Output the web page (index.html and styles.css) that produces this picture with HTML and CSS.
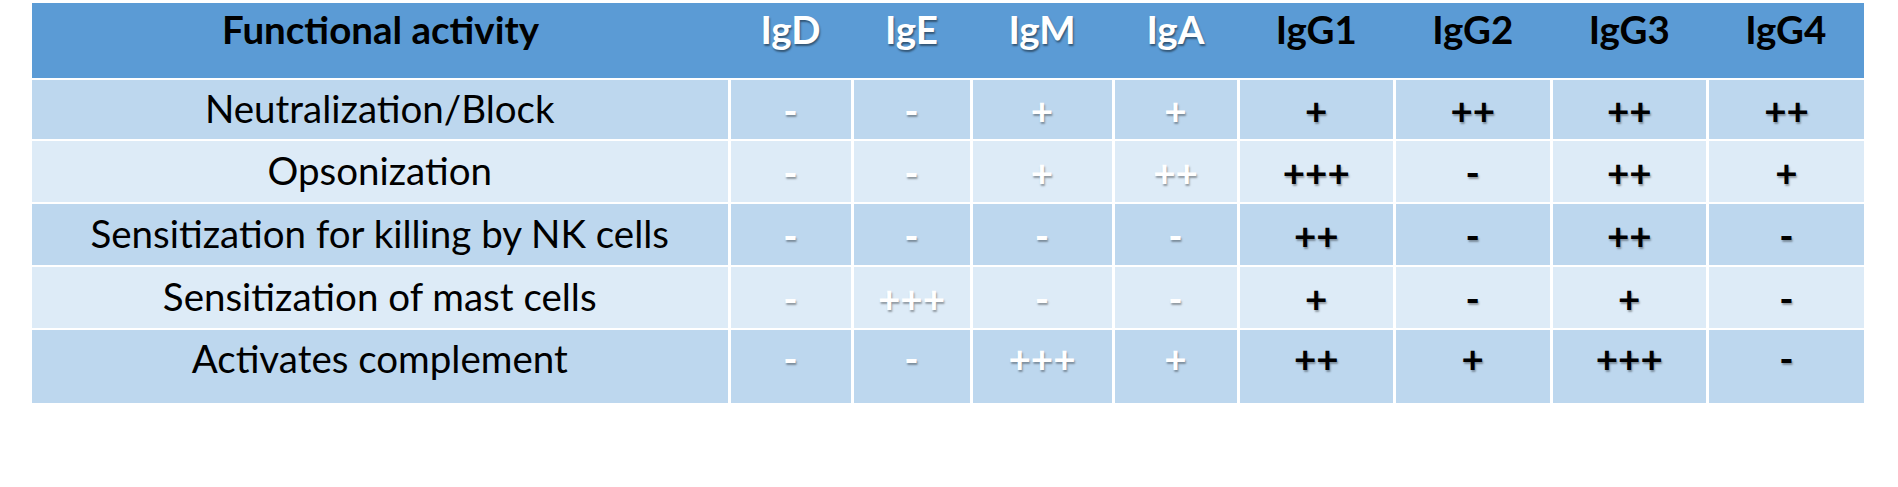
FILE: index.html
```html
<!DOCTYPE html>
<html>
<head>
<meta charset="utf-8">
<link rel="stylesheet" href="styles.css">
</head>
<body>
<table class="ig-table">
  <colgroup>
    <col class="c-func">
    <col class="c-a"><col class="c-b"><col class="c-c"><col class="c-d">
    <col class="c-g"><col class="c-g"><col class="c-g"><col class="c-g">
  </colgroup>
  <thead>
    <tr class="head">
      <th class="dark">Functional activity</th>
      <th class="light">IgD</th>
      <th class="light">IgE</th>
      <th class="light">IgM</th>
      <th class="light">IgA</th>
      <th class="dark">IgG1</th>
      <th class="dark">IgG2</th>
      <th class="dark">IgG3</th>
      <th class="dark">IgG4</th>
    </tr>
  </thead>
  <tbody>
    <tr class="odd r1">
      <td class="label">Neutralization/Block</td>
      <td class="w">-</td><td class="w">-</td><td class="w">+</td><td class="w">+</td>
      <td class="b">+</td><td class="b">++</td><td class="b">++</td><td class="b">++</td>
    </tr>
    <tr class="even r2">
      <td class="label">Opsonization</td>
      <td class="w">-</td><td class="w">-</td><td class="w">+</td><td class="w">++</td>
      <td class="b">+++</td><td class="b">-</td><td class="b">++</td><td class="b">+</td>
    </tr>
    <tr class="odd r3">
      <td class="label">Sensitization for killing by NK cells</td>
      <td class="w">-</td><td class="w">-</td><td class="w">-</td><td class="w">-</td>
      <td class="b">++</td><td class="b">-</td><td class="b">++</td><td class="b">-</td>
    </tr>
    <tr class="even r4">
      <td class="label">Sensitization of mast cells</td>
      <td class="w">-</td><td class="w">+++</td><td class="w">-</td><td class="w">-</td>
      <td class="b">+</td><td class="b">-</td><td class="b">+</td><td class="b">-</td>
    </tr>
    <tr class="odd r5 last">
      <td class="label">Activates complement</td>
      <td class="w">-</td><td class="w">-</td><td class="w">+++</td><td class="w">+</td>
      <td class="b">++</td><td class="b">+</td><td class="b">+++</td><td class="b">-</td>
    </tr>
  </tbody>
</table>
</body>
</html>
```
FILE: styles.css
```css
html, body {
  margin: 0;
  padding: 0;
  background: #ffffff;
}

body {
  padding: 3px 0 0 32px;
  font-family: Lato, "Open Sans", sans-serif;
}

.ig-table {
  border-collapse: collapse;
  table-layout: fixed;
  width: 1832px;
}

.c-func { width: 697px; }
.c-a { width: 123px; }
.c-b { width: 119px; }
.c-c { width: 142px; }
.c-d { width: 125px; }
.c-g { width: 156.5px; }

.head th {
  background: #5b9bd5;
  height: 73px;
  padding: 2px 0 0 0;
  vertical-align: top;
  font-size: 38.5px;
  font-weight: 700;
  line-height: 48px;
  text-align: center;
  border-bottom: 2px solid #ffffff;
}

.head th.light {
  color: #ffffff;
  text-shadow: 1px 2px 2px rgba(0, 0, 0, 0.45);
}

.head th.dark {
  color: #000000;
}

tbody td {
  text-align: center;
  vertical-align: middle;
  font-size: 38.5px;
  line-height: 44px;
  padding: 0;
  border-top: 2px solid #ffffff;
  border-left: 3px solid #ffffff;
}

tbody td.label {
  border-left: none;
  color: #000000;
  font-weight: 400;
  padding-bottom: 4px;
}

tbody tr { height: 63px; }
tbody tr.r1 { height: 61px; }
tbody tr.r1 td { border-top: none; }
tbody tr.last { height: 74px; }
tbody tr.last td { vertical-align: top; padding-top: 6px; }

tr.odd td { background: #bdd7ee; }
tr.even td { background: #ddebf7; }

td.w {
  color: #ffffff;
  font-weight: 700;
  text-shadow: 1px 2px 2px rgba(0, 0, 0, 0.35);
}

td.b {
  color: #000000;
  font-weight: 700;
  text-shadow: 1px 2px 2px rgba(0, 0, 0, 0.35);
}
```
